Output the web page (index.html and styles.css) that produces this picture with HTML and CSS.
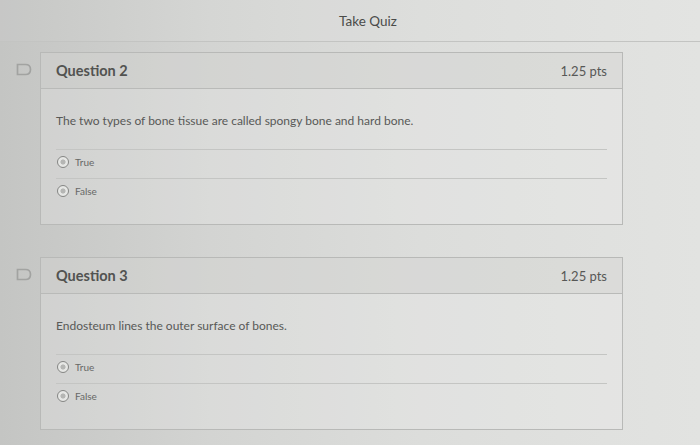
FILE: index.html
```html
<!DOCTYPE html>
<html lang="en">
<head>
<meta charset="utf-8">
<title>Take Quiz</title>
<link rel="stylesheet" href="styles.css">
</head>
<body>
<header class="topbar"><span class="title">Take Quiz</span></header>
<main class="quiz">
  <section class="qrow">
    <div class="gutter">
      <svg class="flag" viewBox="0 0 16 13" width="16" height="13"><path d="M1.5 1.5 H9.5 Q14.5 1.5 14.5 6.5 Q14.5 11.5 9.5 11.5 H1.5 Z" fill="none" stroke="#a2a3a1" stroke-width="1.7"/></svg>
    </div>
    <div class="card">
      <div class="card-head"><h2 class="qname">Question 2</h2><span class="pts">1.25 pts</span></div>
      <div class="card-body">
        <p class="qtext">The two types of bone tissue are called spongy bone and hard bone.</p>
        <ul class="answers">
          <li class="answer"><span class="radio"></span>True</li>
          <li class="answer"><span class="radio"></span>False</li>
        </ul>
      </div>
    </div>
  </section>
  <section class="qrow">
    <div class="gutter">
      <svg class="flag" viewBox="0 0 16 13" width="16" height="13"><path d="M1.5 1.5 H9.5 Q14.5 1.5 14.5 6.5 Q14.5 11.5 9.5 11.5 H1.5 Z" fill="none" stroke="#a2a3a1" stroke-width="1.7"/></svg>
    </div>
    <div class="card">
      <div class="card-head"><h2 class="qname">Question 3</h2><span class="pts">1.25 pts</span></div>
      <div class="card-body">
        <p class="qtext">Endosteum lines the outer surface of bones.</p>
        <ul class="answers">
          <li class="answer"><span class="radio"></span>True</li>
          <li class="answer"><span class="radio"></span>False</li>
        </ul>
      </div>
    </div>
  </section>
</main>
</body>
</html>
```
FILE: styles.css
```css
html, body {
  margin: 0;
  padding: 0;
}
body {
  width: 700px;
  height: 445px;
  overflow: hidden;
  font-family: Lato, "Liberation Sans", sans-serif;
  color: #555654;
  background: linear-gradient(90deg, #c4c5c3 0%, #d3d4d2 30%, #dcdddb 60%, #e2e3e1 100%);
}
.topbar {
  height: 41px;
  border-bottom: 1px solid #c3c4c2;
  display: flex;
  align-items: center;
  justify-content: center;
  padding-left: 36px;
  box-sizing: content-box;
  background: rgba(255,255,255,0.05);
}
.title {
  font-size: 13.5px;
  color: #4a4b49;
  margin-top: 1px;
}
.quiz {
  padding-top: 10px;
  display: flex;
  flex-direction: column;
  gap: 32px;
}
.qrow {
  display: flex;
}
.gutter {
  width: 40px;
  display: flex;
  justify-content: flex-start;
  padding-left: 16px;
  padding-top: 11px;
  box-sizing: border-box;
}
.flag {
  display: block;
}
.card {
  width: 583px;
  border: 1px solid #b8b9b7;
  box-sizing: border-box;
  background: rgba(240,241,239,0.25);
}
.card-head {
  height: 35px;
  border-bottom: 1px solid #b9bab8;
  background: rgba(190,191,189,0.25);
  display: flex;
  align-items: center;
  justify-content: space-between;
  padding: 0 15px 0 15px;
}
.qname {
  margin: 0;
  font-size: 14.5px;
  font-weight: 700;
  color: #525351;
}
.pts {
  font-size: 13px;
  color: #575856;
}
.card-body {
  padding: 23px 15px 17px 15px;
}
.qtext {
  margin: 0;
  font-size: 12px;
  line-height: 18px;
  color: #585957;
}
.answers {
  list-style: none;
  margin: 19px 0 0 0;
  padding: 0;
}
.answer {
  height: 24px;
  padding-bottom: 4px;
  border-top: 1px solid #c4c5c3;
  display: flex;
  align-items: center;
  padding-left: 1px;
  font-size: 10px;
  color: #676866;
}
.radio {
  width: 10px;
  height: 10px;
  border: 1px solid #858684;
  border-radius: 50%;
  background: radial-gradient(circle, #b5b6b4 0 30%, #e6e7e5 42%);
  margin-right: 6px;
  flex: none;
}
```
